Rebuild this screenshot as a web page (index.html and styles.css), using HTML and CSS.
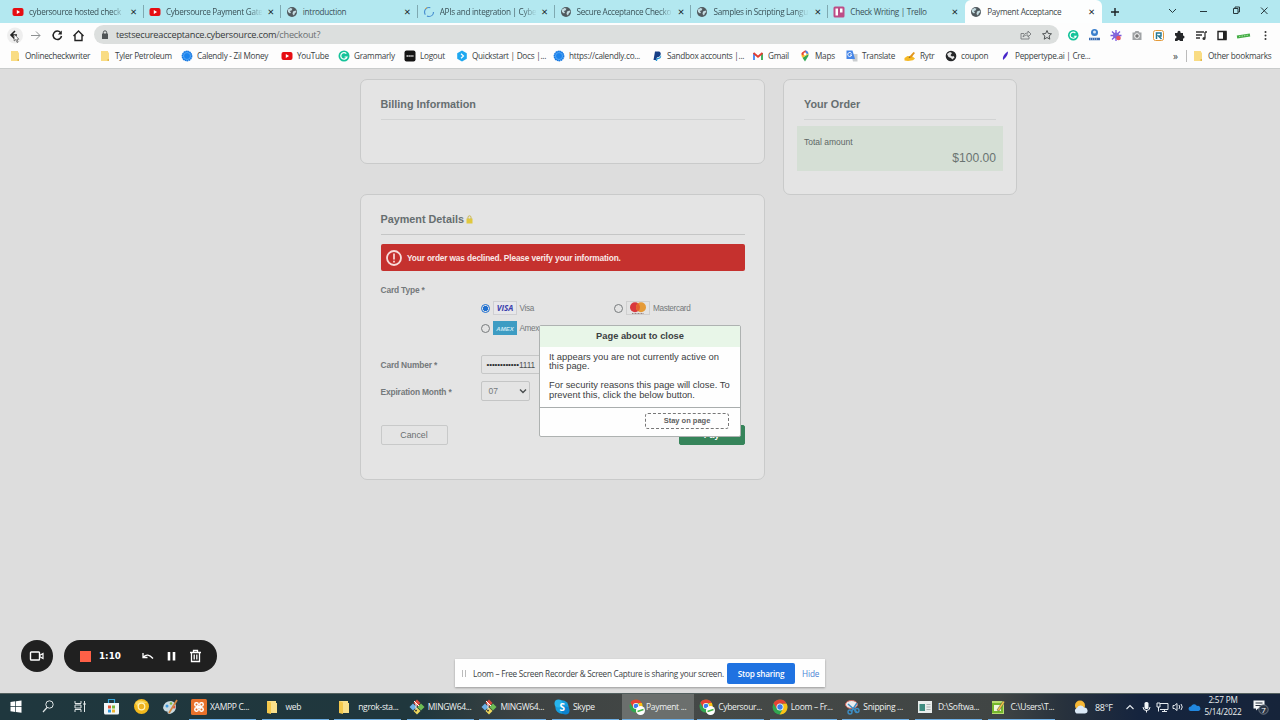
FILE: index.html
```html
<!DOCTYPE html>
<html lang="en">
<head>
<meta charset="utf-8">
<title>Payment Acceptance</title>
<link rel="stylesheet" href="styles.css">
</head>
<body>
<svg class="defs" aria-hidden="true">
  <symbol id="yt" viewBox="0 0 12 12"><rect x=".5" y="2" width="11" height="8" rx="2" fill="#e60d12"/><path d="M4.8 4v4l3.300-2z" fill="#fff"/></symbol>
  <symbol id="globe" viewBox="0 0 12 12"><circle cx="6" cy="6" r="5" fill="#50595e"/><path d="M2 3.500 4.500 2l2 .8L5.500 4.500 3.800 5 5 6.500 4 7.500 2 6zM7 5.500l2.500-1 1 1.500-1.500 1-1 2.500L6.500 8z" fill="#c5dde2"/></symbol>
  <symbol id="folder" viewBox="0 0 12 12"><path d="M2 1h7v1.500h1V11H2z" fill="#f9dc83"/><path d="M8.500 9H10v2H8.500z" fill="#e2b84c"/></symbol>
  <symbol id="calendly" viewBox="0 0 12 12"><circle cx="6" cy="6" r="4.700" fill="#1b84ee" stroke="#1578e2" stroke-width="1.400" stroke-dasharray="1.500 .5"/><circle cx="6" cy="6" r="3.500" fill="none" stroke="#79baf7" stroke-width=".6"/></symbol>
  <symbol id="grammarly" viewBox="0 0 12 12"><circle cx="6" cy="6" r="5.500" fill="#15c39a"/><path d="M8.300 3.700A3.200 3.200 0 1 0 9 7H6.600" fill="none" stroke="#fff" stroke-width="1.200"/></symbol>
  <symbol id="chrome" viewBox="0 0 16 16"><circle cx="8" cy="8" r="7.500" fill="#31a650"/><path d="M1.500 4.300A7.500 7.500 0 0 1 14.700 4.700H8L4.800 9.800z" fill="#e54335"/><path d="M14.700 4.700A7.500 7.500 0 0 1 7.600 15.500L11.200 9.500 11 4.700z" fill="#fbc116"/><circle cx="8" cy="8" r="3.500" fill="#fff"/><circle cx="8" cy="8" r="2.700" fill="#3b7ded"/></symbol>
  <symbol id="chromebadge" viewBox="0 0 16 16"><use href="#chrome" width="14" height="14"/><circle cx="11.500" cy="11.500" r="4.500" fill="#fff"/><path d="m8.500 12.500 6-2" stroke="#45b649" stroke-width="1.600"/></symbol>
  <symbol id="git" viewBox="0 0 16 16"><path d="M8 .5 4.500 4 8 7.500 11.500 4z" fill="#dc4b3e"/><path d="M4 4.500.5 8 4 11.500 7.500 8z" fill="#6db0e7"/><path d="m12 4.500-3.500 3.500 3.500 3.500L15.500 8z" fill="#6fbd55"/><path d="M8 8.500 4.500 12 8 15.500 11.500 12z" fill="#eed85d"/><path d="m5 2 5 5M7 4v8" stroke="#fff" stroke-width="1"/><circle cx="7" cy="11.500" r="1" fill="#333"/></symbol>
  <symbol id="explorer" viewBox="0 0 16 16"><path d="M3 2h9v2h1v10H3z" fill="#fbe08a"/><path d="m3 2 4 1.500V15l-4-1z" fill="#f5c84b"/></symbol>
</svg>

<header class="browser">
  <div class="tabs">
    <div class="tab"><svg class="i12"><use href="#yt"/></svg><span class="tab-t fade">cybersource hosted check</span><b class="x">✕</b></div>
    <div class="tab"><svg class="i12"><use href="#yt"/></svg><span class="tab-t fade">Cybersource Payment Gate</span><b class="x">✕</b></div>
    <div class="tab"><svg class="i12"><use href="#globe"/></svg><span class="tab-t">introduction</span><b class="x">✕</b></div>
    <div class="tab"><svg class="i12" viewBox="0 0 12 12"><circle cx="6" cy="6" r="4.500" fill="none" stroke="#4a90d0" stroke-width="1.200" stroke-dasharray="9 2 11 6"/><path d="M2 3a5 5 0 0 1 2-1.500" stroke="#e7b04c" fill="none"/></svg><span class="tab-t fade">APIs and integration | Cybe</span><b class="x">✕</b></div>
    <div class="tab"><svg class="i12"><use href="#globe"/></svg><span class="tab-t fade">Secure Acceptance Checko</span><b class="x">✕</b></div>
    <div class="tab"><svg class="i12"><use href="#globe"/></svg><span class="tab-t fade">Samples in Scripting Langu</span><b class="x">✕</b></div>
    <div class="tab last"><svg class="i12" viewBox="0 0 12 12"><rect x=".5" y=".5" width="11" height="11" rx="1.500" fill="#bd4c86"/><path d="M2.500 2.500H5v7H2.500zM7 2.500h2.500v4H7z" fill="#fff"/></svg><span class="tab-t">Check Writing | Trello</span><b class="x">✕</b></div>
    <div class="tab active"><svg class="i12"><use href="#globe"/></svg><span class="tab-t">Payment Acceptance</span><b class="x">✕</b></div>
    <svg class="newtab" viewBox="0 0 10 10"><path d="M5 1v8M1 5h8" stroke="#1a2022" stroke-width="1.400"/></svg>
    <svg class="winctl" viewBox="0 0 112 20"><g fill="none" stroke="#27383d"><path d="m3 7 3.500 3.500L10 7M34 9.500h7M67.500 6.500h4.500v5h-4.500zM69 6.500V5h4.500v5H72M95 5.500l6.500 6.500M101.500 5.500 95 12" stroke-width="1"/></g></svg>
  </div>

  <div class="toolbar">
    <svg class="nav" viewBox="0 0 90 22"><circle cx="15" cy="11.500" r="8" fill="#eee"/><path d="m15 7-4 4 4 4M11 11h6" fill="none" stroke="#222" stroke-width="1.600"/><path d="m14 10 .2 7 1.600-1.500 1.300 3 1-.5-1.200-2.800h2z" fill="#fff" stroke="#333" stroke-width=".6"/><path d="M31 11.500h9m-4-4 4 4-4 4" fill="none" stroke="#8d9192" stroke-width="1"/><path d="M60.500 8.500A4.200 4.200 0 1 0 61.500 12" fill="none" stroke="#222" stroke-width="1.500"/><path d="M61.800 6.500v4h-4z" fill="#222"/><path d="m73.500 12 5-5 5 5M75 11v5.500h7V11" fill="none" stroke="#222" stroke-width="1.400"/></svg>
    <div class="address">
      <svg class="lock" viewBox="0 0 8 10"><rect x="1" y="3.500" width="6" height="5.500" rx=".6" fill="#4f5456"/><path d="M2.300 4V2.500a1.700 1.700 0 0 1 3.400 0V4" fill="none" stroke="#4f5456"/></svg>
      <span class="url">testsecureacceptance.cybersource.com<i>/checkout?</i></span>
      <svg class="share" viewBox="0 0 36 14"><path d="M6 5.500H3V11h8V9M5 9c.5-2.500 2-4 5-4V3l3 3-3 3V7C8 7 6.500 7.500 5 9z" fill="none" stroke="#777b7d" stroke-width=".9"/><path d="m29 2.500 1.300 3 3.200.3-2.400 2.200.7 3.200L29 9.500l-2.800 1.700.7-3.200-2.400-2.200 3.200-.3z" fill="none" stroke="#4f5355" stroke-width="1"/></svg>
    </div>
    <svg class="ext" viewBox="0 0 214 22">
      <use href="#grammarly" x="1.500" y="5.500" width="11.500" height="11.500"/>
      <circle cx="28.500" cy="8.500" r="3.500" fill="#3b7fcc"/><circle cx="28.500" cy="8" r="1.500" fill="#d8e8f8"/><path d="M23 15h11" stroke="#3b6db2" stroke-width="2.500"/><path d="M24 15h8" stroke="#c6d7ed" stroke-dasharray="1 1"/>
      <path d="M50 6v11M44.500 11.500h11M46 7.500l8 8M54 7.500l-8 8" stroke="#7a59df" stroke-width="1.300"/><circle cx="50" cy="11.500" r="3" fill="#8266da"/><circle cx="52.500" cy="14" r="2.300" fill="#e85360"/>
      <path d="M66.500 8.500h2l1-1.500h3l1 1.500h2V16h-9z" fill="#a0a3a5"/><circle cx="71" cy="12" r="2.300" fill="#777" stroke="#fff"/>
      <rect x="87.500" y="6.500" width="10" height="10" rx="2" fill="#fff" stroke="#e49b3b"/><path d="M90.500 15V9h4.500v3h-2.500l3 3" fill="none" stroke="#277893" stroke-width="1.500"/>
      <path d="M109 9h2.500a1.600 1.600 0 1 1 3 0h2.500v2.500a1.500 1.500 0 1 1 0 3V17h-3a1.400 1.400 0 0 0-2.600 0H109v-2.500a1.500 1.500 0 0 0 0-3z" fill="#252729"/>
      <path d="M130 8h8m-8 3h6m-6 3h4m5-6v6m0-6h2" stroke="#333" stroke-width="1.300"/><circle cx="138" cy="14.500" r="1.500" fill="#333"/>
      <path d="M152 7.500h8v8h-8z" fill="#fff" stroke="#222" stroke-width="1.400"/><path d="M157 7.500h3.500v8H157z" fill="#222"/>
      <path d="m171 13 13-2" stroke="#43ad45" stroke-width="3"/><path d="m173 12.500 9-1.300" stroke="#a6dfa2" stroke-dasharray="1.500 1"/>
      <g fill="#333"><circle cx="199.500" cy="8" r="1"/><circle cx="199.500" cy="11.500" r="1"/><circle cx="199.500" cy="15" r="1"/></g>
    </svg>
  </div>

  <nav class="bookmarks">
    <span class="bm"><svg class="i12"><use href="#folder"/></svg>Onlinecheckwriter</span>
    <span class="bm"><svg class="i12"><use href="#folder"/></svg>Tyler Petroleum</span>
    <span class="bm"><svg class="i12"><use href="#calendly"/></svg>Calendly - Zil Money</span>
    <span class="bm"><svg class="i12"><use href="#yt"/></svg>YouTube</span>
    <span class="bm"><svg class="i12"><use href="#grammarly"/></svg>Grammarly</span>
    <span class="bm"><svg class="i12" viewBox="0 0 12 12"><rect x=".5" y=".5" width="11" height="11" rx="2" fill="#151515"/><path d="M2.500 6h7" stroke="#ddd" stroke-width="1.500" stroke-dasharray="1.500 .4"/></svg>Logout</span>
    <span class="bm"><svg class="i12" viewBox="0 0 12 12"><path d="m6 .5 4.800 2.700v5.600L6 11.500 1.200 8.800V3.200z" fill="#1fa8f0"/><path d="m5 3.800 2.500 2.200L5 8.200" fill="none" stroke="#fff" stroke-width="1.200"/></svg>Quickstart | Docs |...</span>
    <span class="bm"><svg class="i12"><use href="#calendly"/></svg>https://calendly.co...</span>
    <span class="bm"><svg class="i12" viewBox="0 0 12 12"><path d="M4 1.500h4q2.500 1 1.500 3.500Q8.500 7.500 6 7.300L5.300 10H2.500z" fill="#173e86"/><path d="M6 8q3.500 0 4-3.500 1 4.500-3.500 4.700L6 11H4.500z" fill="#1c95d4"/></svg>Sandbox accounts |...</span>
    <span class="bm"><svg class="i12" viewBox="0 0 12 12"><path d="M2 10V3" stroke="#4285f4" stroke-width="1.800"/><path d="M10 10V3" stroke="#34a853" stroke-width="1.800"/><path d="m1.500 3 4.500 3.700L10.500 3" fill="none" stroke="#e33e32" stroke-width="1.900"/></svg>Gmail</span>
    <span class="bm"><svg class="i12" viewBox="0 0 12 12"><path d="M6 11.500 3.500 7.800 9.500 4Q10 6 8 8.300z" fill="#34a853"/><path d="M2.500 4 6 .8q3 .2 3.600 3.200L3.500 7.800Q2 6 2.500 4" fill="#fabb2c"/><path d="M3 2.500 6 .6 8 1 4 5.500 2.300 4z" fill="#e84435"/><path d="m6 .6q2.800 0 3.500 2.900L7.500 4z" fill="#4285f4"/><circle cx="6" cy="4" r="1.400" fill="#fff"/></svg>Maps</span>
    <span class="bm"><svg class="i12" viewBox="0 0 12 12"><path d="M5 4h6.500v7.500H7z" fill="#c9cdd0"/><path d="M.5.5h6L9 9H.5z" fill="#4686e8"/><path d="M5.500 3.500A2 2 0 1 0 5.700 5H4" fill="none" stroke="#fff"/></svg>Translate</span>
    <span class="bm"><svg class="i12" viewBox="0 0 12 12"><path d="m.5 8 3-2 5 .5 2.500 2-2 1.800-5 .8-3.500-.5z" fill="#f6b923"/><path d="m5 7 4.500-5 1.500 1-4 5z" fill="#e1951d"/><path d="m4.500 8 1-1.500.8.8z" fill="#444"/></svg>Rytr</span>
    <span class="bm"><svg class="i12" viewBox="0 0 12 12"><circle cx="6" cy="6" r="5.300" fill="#26282a"/><path d="M2 4 5 2l2 1-1.500 2.300L7 6.500 8.500 6l1 1.500-2.200 2L6 8 3.500 7z" fill="#e6e6e6"/></svg>coupon</span>
    <span class="bm"><svg class="i12" viewBox="0 0 12 12"><path d="M4 10Q3 6 8 2l1-.5Q9 6 4 10z" fill="#4726c9"/></svg>Peppertype.ai | Cre...</span>
    <span class="more">»</span>
    <span class="bm other"><svg class="i12"><use href="#folder"/></svg>Other bookmarks</span>
  </nav>
</header>

<main class="page">
  <div class="col">
    <section class="card billing"><h2 class="title">Billing Information</h2></section>
    <section class="card payment">
      <h2 class="title">Payment Details <svg class="gold" viewBox="0 0 7 9"><rect x=".5" y="3.500" width="6" height="5" fill="#e0c83e"/><path d="M2 4V2.300a1.500 1.500 0 0 1 3 0V4" fill="none" stroke="#c9b64f"/></svg></h2>
      <div class="alert"><svg viewBox="0 0 18 18"><circle cx="9" cy="9" r="7" fill="none" stroke="#f8dcda" stroke-width="1.800"/><path d="M9 4.500v6M9 11.800v1.800" stroke="#f8dcda" stroke-width="1.700"/></svg><span>Your order was declined. Please verify your information.</span></div>
      <div class="label type-label">Card Type *</div>
      <div class="types">
        <span class="opt"><i class="radio on"></i><svg viewBox="0 0 24 14"><rect x=".5" y=".5" width="23" height="13" fill="#e7e7ea" stroke="#cfcfd2"/><text class="visa" x="12" y="10.200" text-anchor="middle">VISA</text></svg>Visa</span>
        <span class="opt"><i class="radio"></i><svg viewBox="0 0 24 14"><rect x=".5" y=".5" width="23" height="13" fill="#e3e3e3" stroke="#cfcfcf"/><circle cx="9" cy="6.300" r="5" fill="#d9383d"/><circle cx="15" cy="6.300" r="5" fill="#e59a36"/><path d="M12 2.300a5 5 0 0 1 0 8 5 5 0 0 1 0-8" fill="#e3622e"/><path d="M6 12.500h12" stroke="#8a6d6d" stroke-width=".8" stroke-dasharray="1 .5"/></svg>Mastercard</span>
        <span class="opt"><i class="radio"></i><svg viewBox="0 0 24 14"><rect width="24" height="14" fill="#3d9cc3"/><text class="amex" x="12" y="9.800" text-anchor="middle">AMEX</text></svg>Amex</span>
      </div>
      <div class="row number"><span class="label">Card Number *</span><span class="input"><em>••••••••••••</em>1111</span></div>
      <div class="row month"><span class="label">Expiration Month *</span><span class="select">07<svg viewBox="0 0 8 6"><path d="m1 1.500 3 3 3-3" fill="none" stroke="#4a4e4f" stroke-width="1.400"/></svg></span></div>
      <div class="actions"><span class="cancel">Cancel</span><span class="pay">Pay</span></div>
    </section>
  </div>
  <aside class="card order">
    <h2 class="title">Your Order</h2>
    <div class="total"><span>Total amount</span><strong>$100.00</strong></div>
  </aside>

  <div class="modal">
    <div class="modal-h">Page about to close</div>
    <div class="modal-b"><p>It appears you are not currently active on<br>this page.</p><p>For security reasons this page will close. To<br>prevent this, click the below button.</p></div>
    <div class="modal-f"><span class="stay">Stay on page</span></div>
  </div>

  <div class="loom">
    <span class="cam"><svg viewBox="0 0 16 12"><rect x="1.500" y="2" width="9" height="8" rx=".8" fill="none" stroke="#fff" stroke-width="1.400"/><path d="m10.500 5.500 3.500-2v5l-3.500-2" fill="none" stroke="#fff" stroke-width="1.200"/></svg></span>
    <span class="rec"><i class="stop"></i><b>1:10</b><svg viewBox="0 0 62 16"><path d="M3 5v4.500h4.500M3.500 9q4-4.500 9.500 1.500" fill="none" stroke="#fff" stroke-width="1.300"/><path d="M29 4v8.500M34 4v8.500" stroke="#fff" stroke-width="2.600"/><path d="M50 4.500h11M53.500 4V2.500h4V4M51.500 5v8.500h8V5M54.200 6.500v5M56.800 6.500v5" fill="none" stroke="#fff" stroke-width="1.300"/></svg></span>
  </div>
  <div class="share-bar"><i class="grip"></i><span class="share-t">Loom – Free Screen Recorder &amp; Screen Capture is sharing your screen.</span><span class="stop-btn">Stop sharing</span><span class="hide">Hide</span></div>
</main>

<footer class="taskbar">
  <svg class="pins" viewBox="0 0 189 27">
    <path d="m10.500 9 4.800-.7v4.900h-4.800zM16 8.200l5.500-.8v5.800H16zM10.500 14h4.800v4.900l-4.800-.7zM16 14h5.500v5.800L16 19z" fill="#fff"/>
    <circle cx="49.500" cy="11.500" r="3.700" fill="none" stroke="#e1e7e8"/><path d="m47 14.500-4 4.500" stroke="#e1e7e8" stroke-width="1.200"/>
    <path d="M75 8v2.500h6V8M75 19v-2.500h6V19M75 12h6v3h-6zM84.500 8v11M83 11h3" fill="none" stroke="#e1e7e8"/>
    <path d="M104 10h15v10q0 1.500-1.500 1.500h-12q-1.500 0-1.500-1.500z" fill="#f3f7f8"/><path d="M108.500 10V6.500h6V10" fill="none" stroke="#38a9dd" stroke-width="1.200"/><path d="M108 12.500h3v3h-3z" fill="#e65436"/><path d="M112 12.500h3v3h-3z" fill="#79b83c"/><path d="M108 16.500h3v3h-3z" fill="#3099dc"/><path d="M112 16.500h3v3h-3z" fill="#f1b62d"/>
    <circle cx="141.500" cy="13.500" r="7.500" fill="#f2b91d"/><path d="M135 10q4-5 13 0h-6l-3 5z" fill="#fbd85d"/><circle cx="141.500" cy="13.500" r="3.300" fill="#efb221" stroke="#fff3ba" stroke-width="1.200"/>
    <path d="M163 15q1-7 8-7 5 1 5 6t-6 7q-3 0-2.500-2.500-3 .5-4.500-3.500" fill="#c8dae0"/><circle cx="167" cy="13" r="1.500" fill="#3f9adf"/><circle cx="171" cy="10.500" r="1.300" fill="#7dbb45"/><circle cx="174" cy="14" r="1.500" fill="#dc5548"/><path d="m169 20 8-13" stroke="#d38740" stroke-width="1.700"/>
  </svg>
  <div class="tasks">
    <span class="task"><svg viewBox="0 0 16 16"><rect width="16" height="16" rx="1.500" fill="#e8702a"/><rect x="3.800" y="3.800" width="3.400" height="3.400" rx="1.400" fill="none" stroke="#fff" stroke-width="1.500"/><rect x="8.800" y="3.800" width="3.400" height="3.400" rx="1.400" fill="none" stroke="#fff" stroke-width="1.500"/><rect x="3.800" y="8.800" width="3.400" height="3.400" rx="1.400" fill="none" stroke="#fff" stroke-width="1.500"/><rect x="8.800" y="8.800" width="3.400" height="3.400" rx="1.400" fill="none" stroke="#fff" stroke-width="1.500"/><path d="M6 8h4" stroke="#fff" stroke-width="2"/></svg>XAMPP C...</span>
    <span class="task f"><svg><use href="#explorer"/></svg>web</span>
    <span class="task f"><svg><use href="#explorer"/></svg>ngrok-sta...</span>
    <span class="task"><svg><use href="#git"/></svg>MINGW64...</span>
    <span class="task"><svg><use href="#git"/></svg>MINGW64...</span>
    <span class="task"><svg viewBox="0 0 16 16"><circle cx="8" cy="8" r="6.700" fill="#169fe0"/><circle cx="4.500" cy="4.500" r="4" fill="#27b5ee"/><circle cx="11.500" cy="11.500" r="4" fill="#0c83cf"/><text class="skype" x="8" y="12" text-anchor="middle">S</text></svg>Skype</span>
    <span class="task current"><svg><use href="#chromebadge"/></svg>Payment ...</span>
    <span class="task"><svg><use href="#chromebadge"/></svg>Cybersour...</span>
    <span class="task"><svg><use href="#chrome"/></svg>Loom – Fr...</span>
    <span class="task"><svg viewBox="0 0 16 16"><ellipse cx="7.500" cy="5.500" rx="6" ry="4" fill="#e9ecee" stroke="#d46457"/><path d="m4 5 9 8M13 4l-6 9" stroke="#3d8dc3" stroke-width="1.500"/><circle cx="6" cy="13" r="2" fill="none" stroke="#3d8dc3" stroke-width="1.400"/><circle cx="13" cy="11.500" r="2" fill="none" stroke="#3d8dc3" stroke-width="1.400"/></svg>Snipping ...</span>
    <span class="task w"><svg viewBox="0 0 16 16"><rect x="1" y="2" width="14" height="12" fill="#e9edec"/><path d="M2.500 5H8v7H2.500z" fill="#3e8c7f"/><path d="M9.500 5.500h4M9.500 8h4M9.500 10.500h4" stroke="#a9b3b1"/></svg>D:\Softwa...</span>
    <span class="task w"><svg viewBox="0 0 16 16"><path d="M2 2h12v13H2z" fill="#b8dc70"/><path d="M2 4h11v10H2z" fill="#74b72d"/><path d="M4 6h7v6H4z" fill="#f0f6db"/><path d="m7 11 6-9 1.800 1L9 12z" fill="#f2c645" stroke="#444" stroke-width=".5"/></svg>C:\Users\T...</span>
  </div>
  <div class="tray">
    <svg class="wx" viewBox="0 0 16 16"><circle cx="7" cy="6.500" r="5" fill="#f6b735"/><path d="M3.500 14.500a3 3 0 0 1 .4-5.500A4 4 0 0 1 11 8.500a3 3 0 0 1 1 6z" fill="#dbe9f7"/></svg>
    <span class="temp">88°F</span>
    <svg class="sys" viewBox="0 0 78 16"><g fill="none" stroke="#e6ebf0"><path d="m2.500 10 3.500-3.500L9.500 10" stroke-width="1.100"/><path d="M36 4.500h8v6h-8M38 12.500h5M40.500 10.500v2M33 4h3v4h-3zM34.500 8v4.500"/><path d="M49 6.500h1.500L53 4.500v7l-2.500-2H49zM55 6q1.500 2 0 4M57 5q2.500 3 0 6"/></g><rect x="20.500" y="3" width="4" height="7" rx="1.500" fill="#f2f5f8"/><path d="M19 8q0 3.500 3.500 3.500T26 8M22.500 11v2.500" fill="none" stroke="#f2f5f8"/><path d="M66.500 12a2.200 2.200 0 0 1 .5-4.400A3.300 3.300 0 0 1 73 7a2.500 2.500 0 0 1 1.500 5z" fill="#2188e0"/></svg>
    <span class="clock">2:57 PM<br>5/14/2022</span>
    <svg class="note" viewBox="0 0 18 18"><path d="M1.500 2.500h11v8H6L4 12.500v-2H1.500z" fill="#f5f7f9"/><path d="M3.500 5h7M3.500 7.500h6" stroke="#26303f"/><circle cx="11.500" cy="11.500" r="4.700" fill="#2a3545" stroke="#8b939e" stroke-width=".7"/><text class="seven" x="11.500" y="14.500" text-anchor="middle">7</text></svg>
  </div>
</footer>
</body>
</html>
```
FILE: styles.css
```css
* { box-sizing: border-box; }
html, body { margin: 0; width: 1280px; height: 720px; overflow: hidden; }
body { display: flex; flex-direction: column; font-family: "Open Sans", "Noto Sans", sans-serif; font-size: 8px; color: #3b4244; background: #ddd; }
i, em { font-style: normal; }
svg { flex: none; display: block; }
span { white-space: nowrap; }
.defs { position: absolute; width: 0; height: 0; }
.i12 { width: 12px; height: 12px; }

.tabs { height: 23px; background: #b3e8f0; display: flex; align-items: center; padding-left: 7px; }
.tab { width: 136.9px; height: 23px; padding: 0 6px 0 5px; display: flex; align-items: center; gap: 5px; position: relative; flex: none; color: #3b5258; }
.tab::after { content: ""; position: absolute; right: 0; top: 5px; height: 13px; width: 1px; background: #7fa9b1; }
.tab.last::after, .tab.active::after { display: none; }
.tab-t { width: 96px; font-size: 8.2px; letter-spacing: -.3px; }
.fade { -webkit-mask-image: linear-gradient(90deg, #000 86%, transparent 101%); mask-image: linear-gradient(90deg, #000 86%, transparent 101%); }
.x { font: bold 8.5px "DejaVu Sans", sans-serif; color: #1b2a2e; width: 9px; text-align: center; }
.active { background: #fdfefe; border-radius: 6px 6px 0 0; color: #41484a; }
.newtab { width: 10px; height: 10px; margin-left: 8px; }
.winctl { width: 112px; height: 20px; margin-left: auto; margin-right: 2px; }

.toolbar { height: 23px; background: #fdfdfd; display: flex; align-items: center; }
.nav { width: 90px; height: 22px; margin-right: 4px; }
.address { width: 965px; height: 19px; border-radius: 10px; background: #dcdfde; display: flex; align-items: center; padding: 0 5px 0 7px; }
.lock { width: 8px; height: 10px; }
.url { font-size: 9.2px; margin-left: 7px; flex: 1; color: #36393a; letter-spacing: -.23px; }
.url i { color: #6a6e70; }
.share { width: 36px; height: 14px; }
.ext { width: 214px; height: 22px; margin-left: 7px; }

.bookmarks { height: 23px; background: #fdfdfd; border-bottom: 1px solid #c9cccc; display: grid; align-items: center; padding: 0 0 3px 9px; grid-template-columns: 90px 82px 100px 57px 66px 52px 97px 98px 101px 47px 47px 58px 41px 54px 174px 13px 94px; }
.bm { display: flex; align-items: center; gap: 4px; font-size: 8.2px; letter-spacing: -.26px; }
.more { font-size: 10px; }
.other { border-left: 1px solid #bbb; padding-left: 5px; }

.page { height: 624px; position: relative; display: flex; align-items: flex-start; gap: 18px; padding: 10px 0 0 360px; font-family: "Liberation Sans", Arial, sans-serif; background: #ddd; }
.col { width: 405px; display: flex; flex-direction: column; gap: 30px; }
.card { border: 1px solid #c9caca; border-radius: 7px; background: #e4e4e4; padding: 17px 19.5px 0; }
.billing { height: 85px; }
.payment { height: 286px; }
.order { width: 234px; height: 116px; padding: 17px 20px 0; }
.title { margin: 0; height: 23px; border-bottom: 1px solid #d2d3d3; font-size: 10.8px; line-height: 15px; color: #666e70; display: flex; gap: 2px; }
.payment .title { border-color: #c5c6c6; }
.gold { width: 7px; height: 9px; margin-top: 3px; }
.total { margin: 6px -7px 0; padding: 10px 7px 0; height: 45px; background: #d5dfd5; display: flex; flex-direction: column; color: #5e6866; font-size: 8.5px; line-height: 12px; }
.total strong { font-size: 12.1px; font-weight: normal; text-align: right; line-height: 21px; color: #6a7472; }
.alert { margin-top: 9px; height: 27px; border-radius: 2px; background: #c5312e; color: #f9e9e8; font-weight: bold; font-size: 8.3px; letter-spacing: -.14px; display: flex; align-items: center; gap: 4px; padding-left: 4.5px; }
.alert svg { width: 18px; height: 18px; }
.label { font-weight: bold; font-size: 8.4px; letter-spacing: -.16px; color: #74797b; }
.type-label { margin-top: 13px; height: 14px; line-height: 12px; }
.types { margin: 0 0 0 100px; display: grid; grid-template-columns: 133.500px 130px; grid-auto-rows: 20px; }
.opt { display: flex; align-items: center; gap: 3px; font-size: 8.2px; letter-spacing: -.35px; color: #74797b; }
.opt svg { width: 24px; height: 14px; }
.radio { width: 9px; height: 9px; border: 1px solid #777b7d; border-radius: 50%; flex: none; }
.radio.on { border-color: #1e6fd0; background: radial-gradient(circle, #1e6fd0 0 2.400px, #e4e4e4 2.900px); }
.visa { font: italic bold 8px "Open Sans", sans-serif; fill: #3c40ad; letter-spacing: 0; }
.amex { font: italic bold 6px "Liberation Sans", sans-serif; fill: #c8e6f2; letter-spacing: 0; }
.row { display: flex; align-items: center; }
.row .label { width: 100px; padding-top: 1px; }
.number { margin-top: 17px; height: 19px; }
.month { margin-top: 7px; height: 20px; }
.input { width: 133px; height: 19px; border: 1px solid #c6c7c7; border-radius: 2px; display: flex; align-items: center; padding-left: 5px; color: #4b4f51; font-size: 8.3px; letter-spacing: -.1px; }
.input em { font-size: 8px; color: #292d2f; }
.select { width: 49px; height: 20px; border: 1px solid #c4c5c5; border-radius: 2px; display: flex; align-items: center; justify-content: space-between; padding: 0 2px 0 7px; font-size: 8.5px; color: #747a7c; }
.select svg { width: 8px; height: 6px; }
.actions { display: flex; justify-content: space-between; margin-top: 24px; }
.cancel, .pay { width: 67px; height: 20px; border-radius: 2px; line-height: 18px; text-align: center; font-size: 8.8px; border: 1px solid #c8c9c9; color: #696e70; font-weight: bold; }
.cancel { font-weight: normal; }
.pay { width: 66px; background: #36845a; border-color: #36845a; color: #fff; }

.modal { position: absolute; left: 539px; top: 256px; width: 202px; height: 112px; border: 1px solid #aeb2b1; border-radius: 2px; background: #fefefe; color: #3c4042; }
.modal-h { height: 21px; background: #e8f6e8; text-align: center; font-weight: bold; font-size: 9.3px; line-height: 21px; }
.modal-b { height: 61px; padding: 5px 9px; border-bottom: 1px solid #a9adad; font-size: 9.4px; line-height: 9.400px; }
.modal-b p { margin: 0 0 9.500px; white-space: nowrap; }
.modal-f { display: flex; justify-content: flex-end; padding: 5px 11px; }
.stay { width: 84px; height: 16px; border: 1px dashed #777; border-radius: 3px; font-size: 7.5px; font-weight: bold; text-align: center; line-height: 14px; color: #5d6061; }

.loom { position: absolute; left: 21px; top: 571px; display: flex; gap: 11px; }
.cam { width: 32px; height: 32px; border-radius: 50%; background: #202020; display: grid; place-items: center; }
.cam svg { width: 16px; height: 12px; }
.rec { width: 153px; height: 32px; border-radius: 16px; background: #202020; color: #fff; display: flex; align-items: center; padding-left: 16px; }
.rec b { font: bold 8.8px "DejaVu Sans", sans-serif; width: 41px; margin-left: 8px; }
.rec svg { width: 62px; height: 16px; }
.stop { width: 11px; height: 11px; background: #ff6047; }
.share-bar { position: absolute; left: 455px; top: 590px; width: 370px; height: 28px; background: #fefefe; box-shadow: 0 1px 2px #999; display: flex; align-items: center; font: 8.2px "Open Sans", sans-serif; letter-spacing: -.26px; }
.grip { width: 4px; height: 7px; border: solid #bbb; border-width: 0 1px; margin: 0 7px; }
.share-t { width: 254px; }
.stop-btn { width: 68px; height: 21px; border-radius: 2px; background: #1f72e1; color: #fff; font-weight: 600; text-align: center; line-height: 21px; }
.hide { margin-left: 7px; color: #4a83d5; letter-spacing: -.1px; }

.taskbar { height: 27px; flex: none; background: linear-gradient(90deg, #1f373e 0, #20373d 33%, #3d4242 41%, #454947 55%, #404544 78%, #28323d 83%, #15243e 89%, #16243a); display: flex; color: #eef1f1; border-top: 1px solid #53605f; }
.pins { width: 189px; height: 27px; margin-top: -1px; }
.tasks { display: flex; gap: 5.600px; }
.task { width: 67px; height: 26px; border-bottom: 1.500px solid #6fb0e6; display: flex; align-items: center; gap: 3px; padding-left: 2px; font-size: 8.5px; letter-spacing: -.32px; }
.task svg { width: 16px; height: 16px; }
.f { gap: 6px; }
.w { gap: 5px; }
.current { background: #6b6f6d; width: 72px; margin: 0 -2.500px; padding-left: 7px; gap: 1px; }
.tray { margin-left: auto; display: flex; align-items: center; }
.wx { width: 16px; height: 16px; }
.temp { width: 29px; margin-left: 6px; font-size: 9px; letter-spacing: -.3px; }
.sys { width: 78px; height: 16px; }
.clock { text-align: center; width: 44px; line-height: 12px; font-size: 8.2px; letter-spacing: -.2px; margin: -2px 0 0 -1px; }
.note { width: 18px; height: 18px; margin: 0 10px 0 7px; }
.skype { font: bold 10px "Open Sans", sans-serif; fill: #fff; }
.seven { font: 8px "Open Sans", sans-serif; fill: #fff; }
```
